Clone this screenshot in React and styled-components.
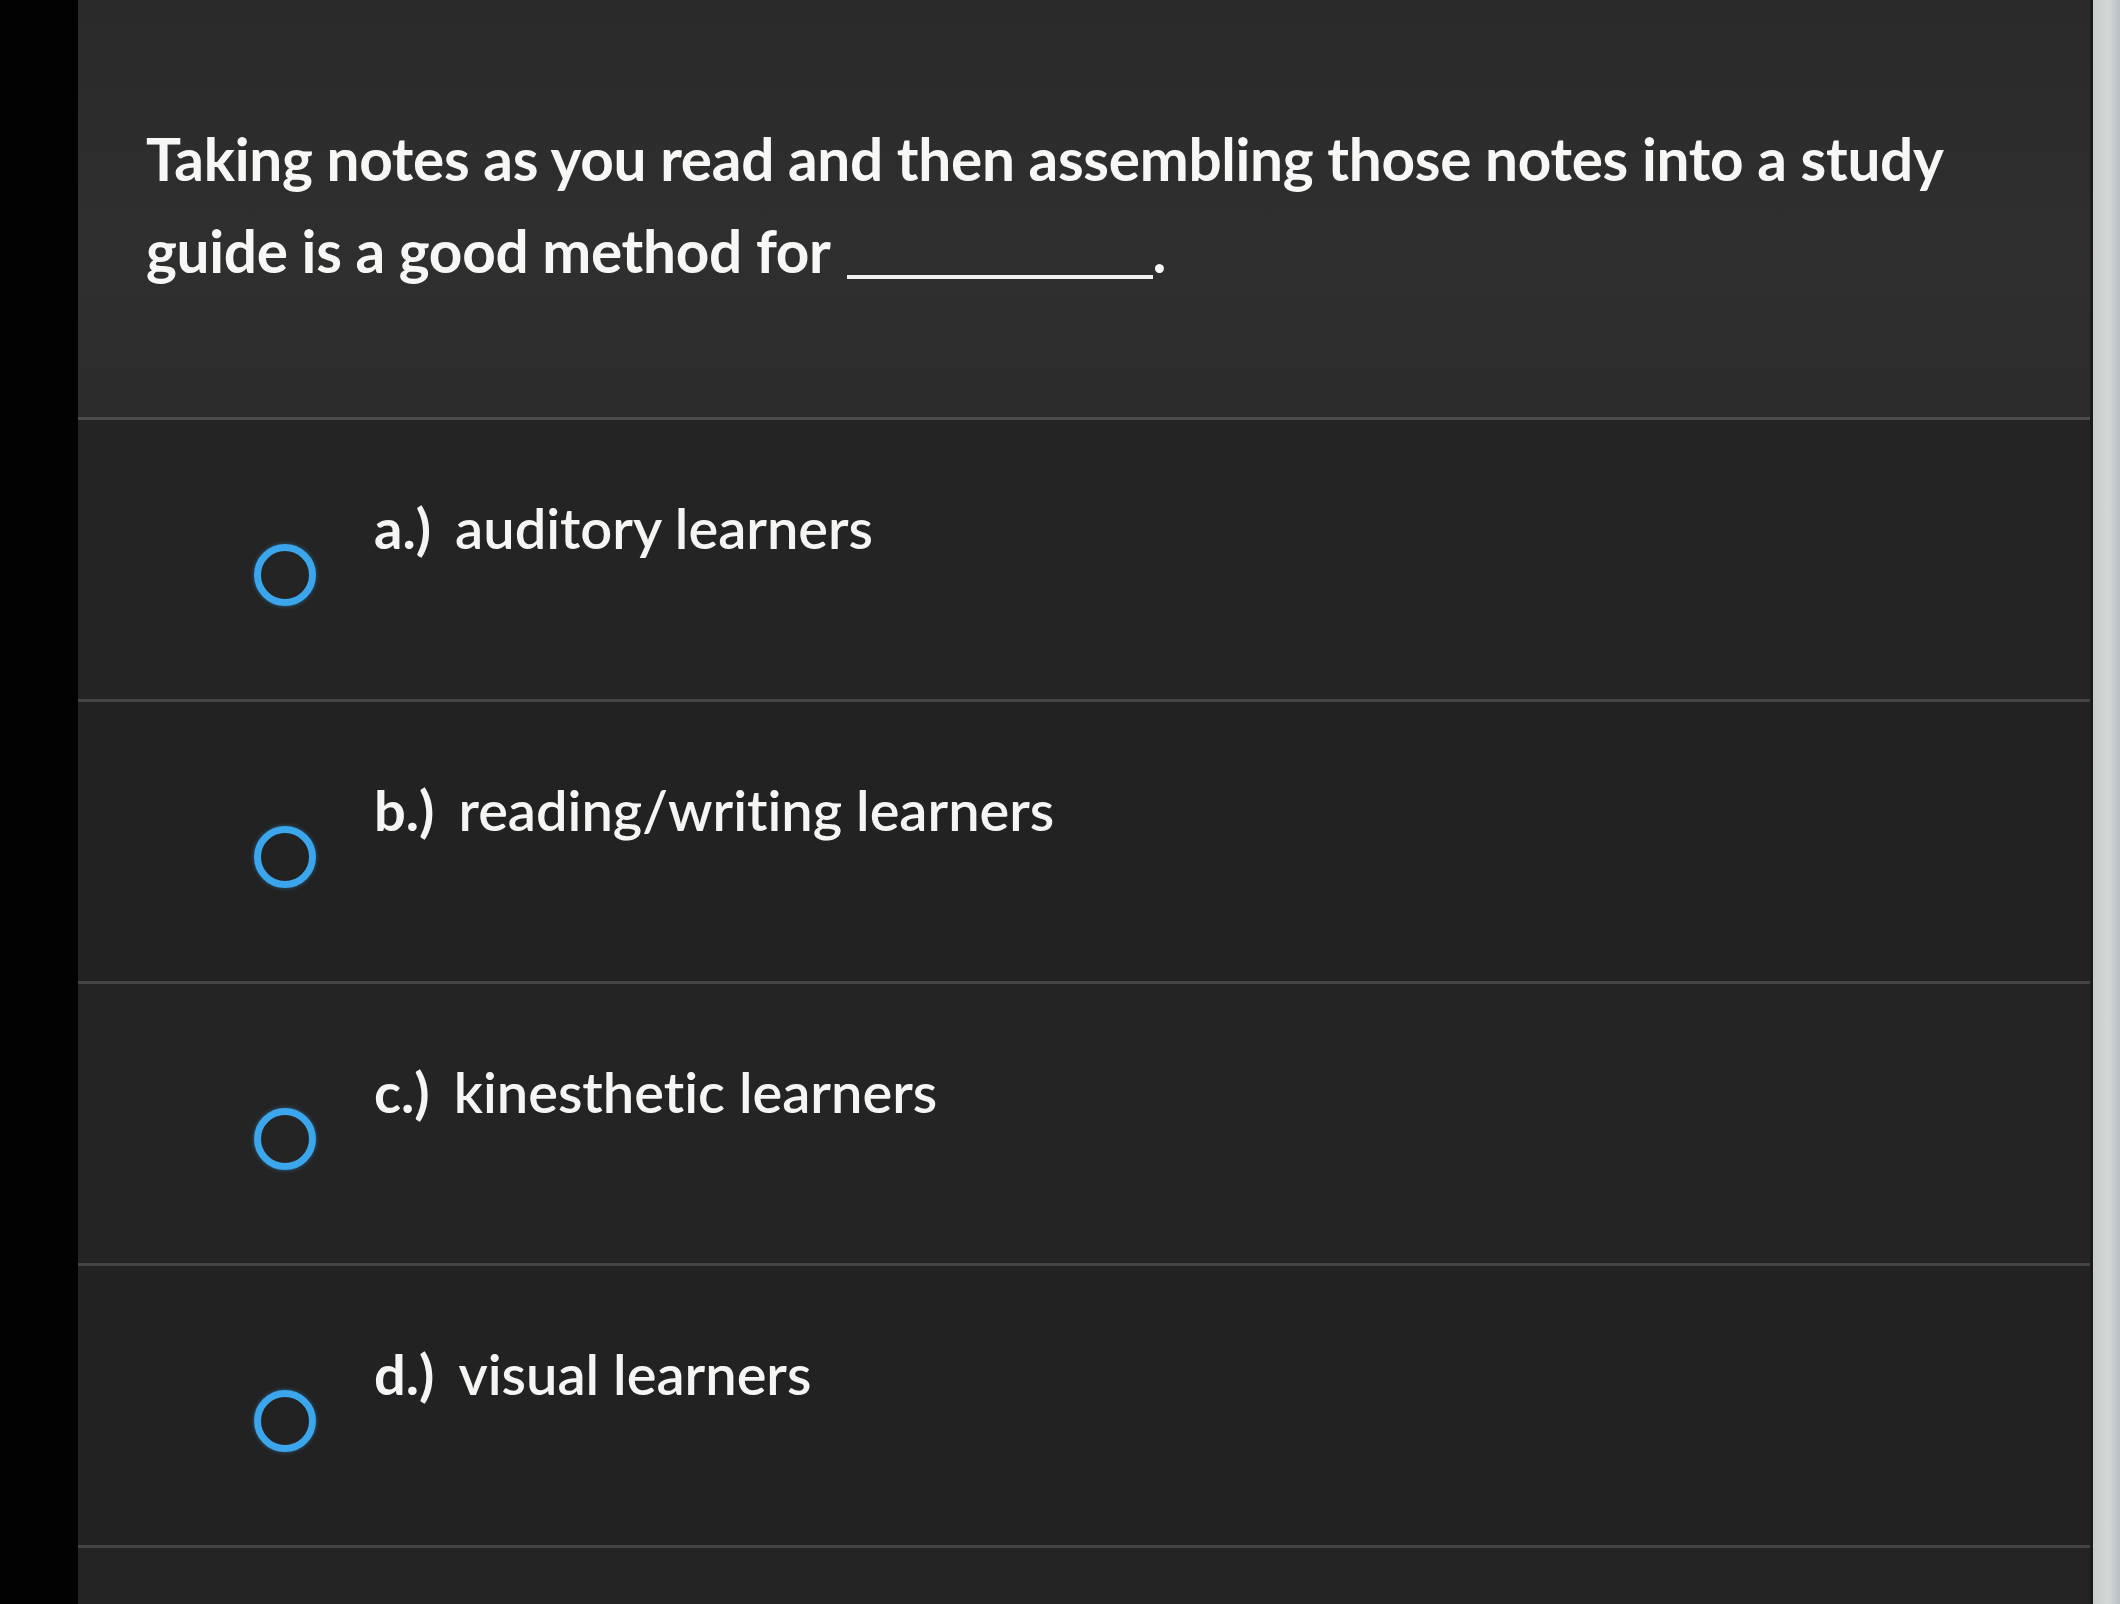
import React from 'react';
import styled, { createGlobalStyle } from 'styled-components';

const GlobalStyle = createGlobalStyle`
  html, body {
    margin: 0;
    padding: 0;
    background: #000;
  }
  body {
    font-family: Lato, "Open Sans", "Liberation Sans", sans-serif;
    font-variant-ligatures: none;
  }
`;

const Screen = styled.div`
  display: flex;
  width: 2120px;
  height: 1604px;
  overflow: hidden;
  background: #000;
`;

const Bezel = styled.div`
  width: 78px;
  flex-shrink: 0;
  background: #020202;
`;

const Edge = styled.div`
  width: 30px;
  flex-shrink: 0;
  background: linear-gradient(90deg, #1a1a1a 0 3px, #c6ccc9 3px, #d3d8d5 60%, #b8c0c4);
`;

const Panel = styled.main`
  flex: 1;
  display: flex;
  flex-direction: column;
  background: #232323;
`;

const QuestionBlock = styled.section`
  height: 420px;
  box-sizing: border-box;
  padding: 112px 40px 0 68px;
  background: linear-gradient(180deg, #2a2a2a 0%, #2f2f2f 60%, #2c2c2c 100%);
  border-bottom: 3px solid #4b4b4b;
`;

const QuestionText = styled.p`
  margin: 0;
  color: #f7f7f5;
  font-size: 58.5px;
  font-weight: 700;
  line-height: 92px;
  letter-spacing: -0.3px;
  white-space: nowrap;
`;

const Blank = styled.span`
  display: inline-block;
  width: 306px;
  height: 4px;
  margin-left: 16px;
  background: #f2f2f2;
  vertical-align: -6px;
`;

const OptionList = styled.ul`
  list-style: none;
  margin: 0;
  padding: 0;
`;

const OptionRow = styled.li`
  height: 282px;
  box-sizing: border-box;
  display: flex;
  align-items: flex-start;
  padding: 76px 0 0 176px;
  border-bottom: 3px solid #444;
  background: ${(p) => (p.$shade ? '#222222' : '#242424')};
`;

const Radio = styled.span`
  width: 48px;
  height: 48px;
  flex-shrink: 0;
  margin-top: 48px;
  border-radius: 50%;
  border: 7px solid #3ba6ec;
  box-shadow: 0 0 4px rgba(58, 163, 234, 0.5);
`;

const Label = styled.div`
  display: flex;
  gap: 24px;
  margin-left: 58px;
  color: #f5f5f3;
  font-size: 56px;
  line-height: 64px;
  font-weight: 600;
`;

const Letter = styled.span`
  font-weight: 700;
`;

const options = [
  { letter: 'a.)', text: 'auditory learners' },
  { letter: 'b.)', text: 'reading/writing learners' },
  { letter: 'c.)', text: 'kinesthetic learners' },
  { letter: 'd.)', text: 'visual learners' },
];

export default function App() {
  return (
    <>
      <GlobalStyle />
      <Screen>
        <Bezel />
        <Panel>
          <QuestionBlock>
            <QuestionText>
              Taking notes as you read and then assembling those notes into a study
              <br />
              guide is a good method for
              <Blank />.
            </QuestionText>
          </QuestionBlock>
          <OptionList>
            {options.map((o, i) => (
              <OptionRow key={o.letter} $shade={i % 2 === 1}>
                <Radio />
                <Label>
                  <Letter>{o.letter}</Letter>
                  <span>{o.text}</span>
                </Label>
              </OptionRow>
            ))}
          </OptionList>
        </Panel>
        <Edge />
      </Screen>
    </>
  );
}
